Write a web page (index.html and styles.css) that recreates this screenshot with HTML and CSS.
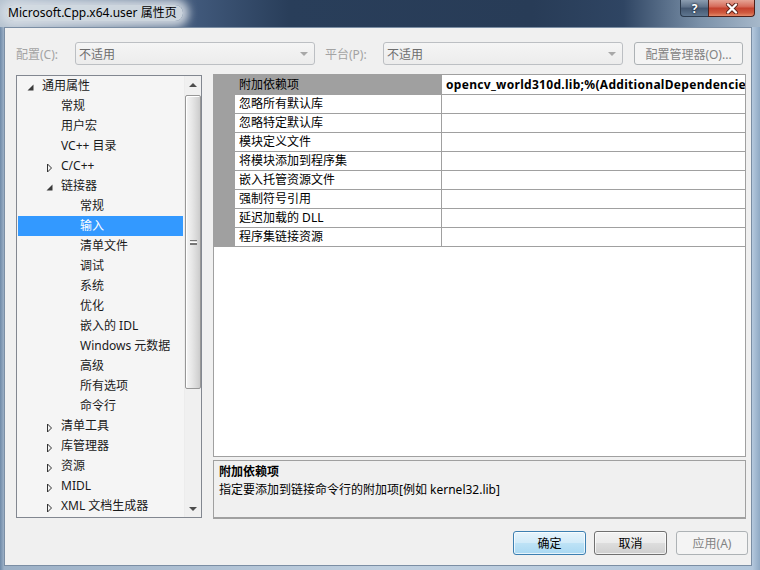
FILE: index.html
```html
<!DOCTYPE html>
<html lang="zh-CN">
  <head>
    <meta charset="UTF-8">
    <title>Microsoft.Cpp.x64.user 属性页</title>
    <link rel="stylesheet" href="styles.css">
  </head>
  <body>
    <div class="window">
      <div class="titlebar">
        <span class="title">Microsoft.Cpp.x64.user 属性页</span>
        <div class="caption-buttons">
          <span class="cap help">?</span>
          <span class="cap close">
            <svg width="14" height="11" viewBox="0 0 14 11">
              <path d="M3 1.5L11 9.5M11 1.5L3 9.5" stroke="#5b2219" stroke-width="4" stroke-linecap="round"/>
              <path d="M3 1.5L11 9.5M11 1.5L3 9.5" stroke="#fff" stroke-width="2.4" stroke-linecap="round"/>
            </svg>
          </span>
        </div>
      </div>

      <div class="client">
        <div class="toolbar">
          <span class="label">配置(C):</span>
          <div class="combo"><span>不适用</span><i class="drop"></i></div>
          <span class="label label-2">平台(P):</span>
          <div class="combo"><span>不适用</span><i class="drop"></i></div>
          <div class="btn btn-disabled mgr-btn">配置管理器(O)...</div>
        </div>

        <div class="main">
          <div class="tree">
            <ul class="tree-list">
              <li class="l0"><svg class="tw" width="16" height="20" viewBox="0 0 16 20"><path d="M7.5 8.5V14.5H1.5Z" fill="#3a3a3a"/></svg>通用属性</li>
              <li class="l1"><span class="tw"></span>常规</li>
              <li class="l1"><span class="tw"></span>用户宏</li>
              <li class="l1"><span class="tw"></span>VC++ 目录</li>
              <li class="l1"><svg class="tw" width="16" height="20" viewBox="0 0 16 20"><path d="M2.5 8V16L6.5 12Z" fill="none" stroke="#333"/></svg>C/C++</li>
              <li class="l1"><svg class="tw" width="16" height="20" viewBox="0 0 16 20"><path d="M7.5 8.5V14.5H1.5Z" fill="#3a3a3a"/></svg>链接器</li>
              <li class="l2"><span class="tw"></span>常规</li>
              <li class="l2 selected"><span class="tw"></span>输入</li>
              <li class="l2"><span class="tw"></span>清单文件</li>
              <li class="l2"><span class="tw"></span>调试</li>
              <li class="l2"><span class="tw"></span>系统</li>
              <li class="l2"><span class="tw"></span>优化</li>
              <li class="l2"><span class="tw"></span>嵌入的 IDL</li>
              <li class="l2"><span class="tw"></span>Windows 元数据</li>
              <li class="l2"><span class="tw"></span>高级</li>
              <li class="l2"><span class="tw"></span>所有选项</li>
              <li class="l2"><span class="tw"></span>命令行</li>
              <li class="l1"><svg class="tw" width="16" height="20" viewBox="0 0 16 20"><path d="M2.5 8V16L6.5 12Z" fill="none" stroke="#333"/></svg>清单工具</li>
              <li class="l1"><svg class="tw" width="16" height="20" viewBox="0 0 16 20"><path d="M2.5 8V16L6.5 12Z" fill="none" stroke="#333"/></svg>库管理器</li>
              <li class="l1"><svg class="tw" width="16" height="20" viewBox="0 0 16 20"><path d="M2.5 8V16L6.5 12Z" fill="none" stroke="#333"/></svg>资源</li>
              <li class="l1"><svg class="tw" width="16" height="20" viewBox="0 0 16 20"><path d="M2.5 8V16L6.5 12Z" fill="none" stroke="#333"/></svg>MIDL</li>
              <li class="l1"><svg class="tw" width="16" height="20" viewBox="0 0 16 20"><path d="M2.5 8V16L6.5 12Z" fill="none" stroke="#333"/></svg>XML 文档生成器</li>
            </ul>
            <div class="scrollbar">
              <div class="sb-btn"><i class="sb-up"></i></div>
              <div class="sb-track">
                <div class="sb-thumb"><i class="grip"></i></div>
              </div>
              <div class="sb-btn"><i class="sb-down"></i></div>
            </div>
          </div>

          <div class="right">
            <div class="grid">
              <div class="row first">
                <div class="gutter"></div>
                <div class="name sel">附加依赖项</div>
                <div class="value strong">opencv_world310d.lib;%(AdditionalDependencies)</div>
              </div>
              <div class="row"><div class="gutter"></div><div class="name">忽略所有默认库</div><div class="value"></div></div>
              <div class="row"><div class="gutter"></div><div class="name">忽略特定默认库</div><div class="value"></div></div>
              <div class="row"><div class="gutter"></div><div class="name">模块定义文件</div><div class="value"></div></div>
              <div class="row"><div class="gutter"></div><div class="name">将模块添加到程序集</div><div class="value"></div></div>
              <div class="row"><div class="gutter"></div><div class="name">嵌入托管资源文件</div><div class="value"></div></div>
              <div class="row"><div class="gutter"></div><div class="name">强制符号引用</div><div class="value"></div></div>
              <div class="row"><div class="gutter"></div><div class="name">延迟加载的 DLL</div><div class="value"></div></div>
              <div class="row"><div class="gutter"></div><div class="name">程序集链接资源</div><div class="value"></div></div>
            </div>
            <div class="desc">
              <div class="desc-title">附加依赖项</div>
              <div>指定要添加到链接命令行的附加项[例如 kernel32.lib]</div>
            </div>
          </div>
        </div>

        <div class="buttons">
          <div class="btn btn-default">确定</div>
          <div class="btn">取消</div>
          <div class="btn btn-disabled">应用(A)</div>
        </div>
      </div>
    </div>
  </body>
</html>
```

FILE: styles.css
```css
* {
    box-sizing: border-box;
}
html, body {
    margin: 0;
}
body {
    font-family: "Noto Sans", "Noto Sans CJK SC", sans-serif;
    font-size: 12px;
    color: #000;
}
.window {
    width: 760px;
    height: 570px;
    display: flex;
    flex-direction: column;
    background: linear-gradient(90deg, #6f8aa8 0, #9cb0c6 4px, #c0d0e0 50%, #b3c7dc 99%, #8fa9c4 100%);
    overflow: hidden;
}
.titlebar {
    height: 27px;
    flex: none;
    display: flex;
    align-items: flex-start;
    background: linear-gradient(90deg, #b6c3d0 0, #a2b2c3 4%, #40587a 26%, #293e5a 38%, #283c57 70%, #2f4563 82%, #7a90a8 92%, #a6b8ca 100%);
}
.title {
    margin: 5px 0 0 6px;
    line-height: 16px;
    padding: 0 6px 0 2px;
    background: rgba(214, 221, 228, 0.92);
    box-shadow: 0 0 8px 6px rgba(214, 221, 228, 0.9);
    border-radius: 8px;
    color: #000;
}
.caption-buttons {
    margin-left: auto;
    margin-right: 5px;
    display: flex;
}
.cap {
    height: 17px;
    display: flex;
    align-items: center;
    justify-content: center;
    color: #fff;
    font-weight: bold;
}
.help {
    width: 28px;
    border: 1px solid #2b3a4d;
    border-top: none;
    border-right: none;
    border-radius: 0 0 0 4px;
    background: linear-gradient(#8c9db0, #5d7088 45%, #43566f 50%, #5f7690);
    text-shadow: 0 0 2px #1d2a3a, 0 0 2px #1d2a3a;
    font-size: 12px;
}
.close {
    width: 47px;
    border: 1px solid #4e1f19;
    border-top: none;
    border-radius: 0 0 4px 0;
    background: linear-gradient(#e6a495, #d66d5c 40%, #c4422e 52%, #cf5a3f 80%, #e58a6a);
}
.client {
    flex: 1;
    margin: 0 8px 4px 4px;
    background: #f0f0f0;
    border: 1px solid #7b8ea4;
    padding: 14px 5px 0 11px;
}
.toolbar {
    display: flex;
    align-items: center;
    height: 23px;
}
.label {
    width: 59px;
    color: #a3a3a3;
}
.label-2 {
    width: 68px;
    padding-left: 10px;
}
.combo {
    width: 240px;
    height: 23px;
    border: 1px solid #bcbfc3;
    border-radius: 3px;
    background: linear-gradient(#f5f5f5, #ececec);
    display: flex;
    align-items: center;
    padding-left: 3px;
    color: #6d6d6d;
}
.drop {
    margin-left: auto;
    margin-right: 6px;
    border-left: 4px solid transparent;
    border-right: 4px solid transparent;
    border-top: 4px solid #a8a8a8;
}
.btn {
    width: 73px;
    height: 24px;
    border: 1px solid #707070;
    border-radius: 3px;
    background: linear-gradient(#f2f2f2, #ebebeb 48%, #dddddd 52%, #cfcfcf);
    box-shadow: inset 0 0 0 1px rgba(255, 255, 255, 0.7);
    display: flex;
    align-items: center;
    justify-content: center;
    white-space: nowrap;
}
.btn-default {
    border-color: #3c7fb1;
    background: linear-gradient(#e6f4fc, #d2ebf9 48%, #bde2f6 52%, #a9d8f2);
}
.btn-disabled {
    border-color: #adb2b5;
    background: #f4f4f4;
    box-shadow: none;
    color: #838383;
}
.toolbar .mgr-btn {
    width: 109px;
    height: 23px;
    margin-left: 11px;
}
.main {
    display: flex;
    align-items: flex-start;
    margin-top: 9px;
    gap: 11px;
}
.tree {
    width: 186px;
    height: 443px;
    margin-top: 1px;
    border: 1px solid #828790;
    background: #f5f5f5;
    display: flex;
}
.tree-list {
    flex: 1;
    list-style: none;
    margin: 0;
    padding: 0 1px;
}
.tree-list li {
    height: 20px;
    line-height: 20px;
    display: flex;
    white-space: nowrap;
    color: #1a1a1a;
}
.tree-list .l0 {
    padding-left: 8px;
}
.tree-list .l1 {
    padding-left: 27px;
}
.tree-list .l2 {
    padding-left: 46px;
}
.tw {
    width: 16px;
    height: 20px;
    flex: none;
}
.tree-list li.selected {
    background: #3399ff;
    color: #fff;
}
.scrollbar {
    width: 17px;
    display: flex;
    flex-direction: column;
    background: #f0f0f0;
    border-left: 1px solid #ececec;
}
.sb-btn {
    height: 17px;
    flex: none;
    display: flex;
    align-items: center;
    justify-content: center;
}
.sb-up {
    border-left: 4px solid transparent;
    border-right: 4px solid transparent;
    border-bottom: 4px solid #4d4d4d;
}
.sb-down {
    border-left: 4px solid transparent;
    border-right: 4px solid transparent;
    border-top: 4px solid #4d4d4d;
}
.sb-track {
    flex: 1;
    padding-top: 2px;
}
.sb-thumb {
    height: 294px;
    border: 1px solid #979797;
    border-radius: 2px;
    background: linear-gradient(90deg, #f6f6f6, #e6e6e6 45%, #d6d6d6 80%, #cbcbcb);
    box-shadow: inset 1px 1px 0 #fff;
    display: flex;
    align-items: center;
    justify-content: center;
}
.grip {
    width: 7px;
    height: 5px;
    border-top: 1px solid #777;
    border-bottom: 1px solid #777;
    background: linear-gradient(#fff 1px, #777 1px, #777 2px, transparent 2px);
    background-position: 0 1px;
    background-repeat: no-repeat;
}
.right {
    width: 533px;
    display: flex;
    flex-direction: column;
    gap: 3px;
}
.grid {
    height: 383px;
    border: 1px solid #a0a0a0;
    background: #fff;
    overflow: hidden;
}
.row {
    display: flex;
    height: 19px;
    line-height: 18px;
}
.row.first {
    height: 20px;
    line-height: 19px;
}
.gutter {
    width: 21px;
    flex: none;
    background: #a0a0a0;
}
.name {
    width: 207px;
    flex: none;
    padding-left: 4px;
    border-bottom: 1px solid #a0a0a0;
    border-right: 1px solid #a0a0a0;
    white-space: nowrap;
}
.name.sel {
    background: #a0a0a0;
}
.value {
    flex: 1;
    min-width: 0;
    padding-left: 4px;
    border-bottom: 1px solid #a0a0a0;
    white-space: nowrap;
    overflow: hidden;
}
.strong {
    font-weight: bold;
    letter-spacing: 0.3px;
}
.desc {
    height: 59px;
    border: 1px solid #a0a0a0;
    border-bottom-width: 2px;
    background: #f0f0f0;
    padding: 2px 5px;
    line-height: 18px;
}
.desc-title {
    font-weight: bold;
}
.buttons {
    display: flex;
    justify-content: flex-end;
    gap: 8px;
    margin-top: 12px;
    margin-right: -2px;
}
.buttons .btn-disabled {
    width: 72px;
    margin-left: 1px;
}
```
